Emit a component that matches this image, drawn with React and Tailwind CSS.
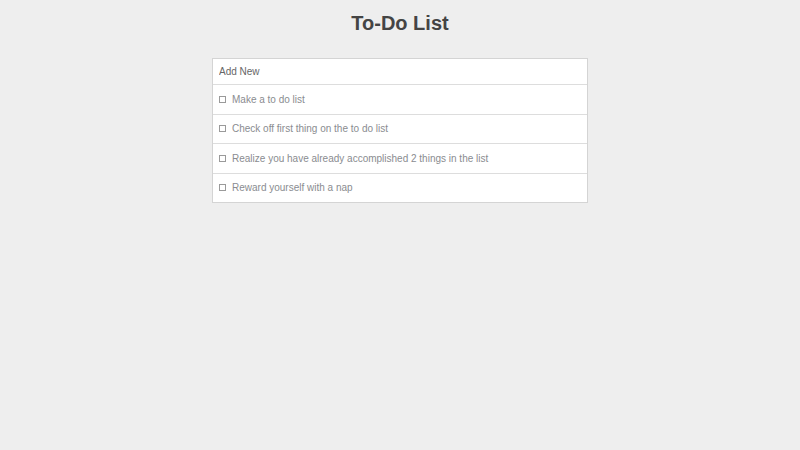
const todos = [
  "Make a to do list",
  "Check off first thing on the to do list",
  "Realize you have already accomplished 2 things in the list",
  "Reward yourself with a nap",
];

function App() {
  return (
    <div className="min-h-[450px] bg-[#eeeeee] font-['Liberation_Sans',Arial,sans-serif]">
      <h1 className="pt-[10px] text-center text-[20px] font-bold leading-[26px] text-[#444444]">
        To-Do List
      </h1>
      <div className="mx-auto mt-[22px] w-[376px] border border-[#d4d4d4] bg-white">
        <input
          type="text"
          placeholder="Add New"
          className="block h-[25px] w-full px-[6px] text-[10px] text-[#666] placeholder-[#666] outline-none"
        />
        {todos.map((item) => (
          <div
            key={item}
            className="flex h-[29.5px] items-center border-t border-[#dddddd] pl-[6px] text-[10px] text-[#8a8c90]"
          >
            <span className="mr-[6px] h-[7px] w-[7px] border border-[#9a9a9a]" />
            <span>{item}</span>
          </div>
        ))}
      </div>
    </div>
  );
}

export default App;
